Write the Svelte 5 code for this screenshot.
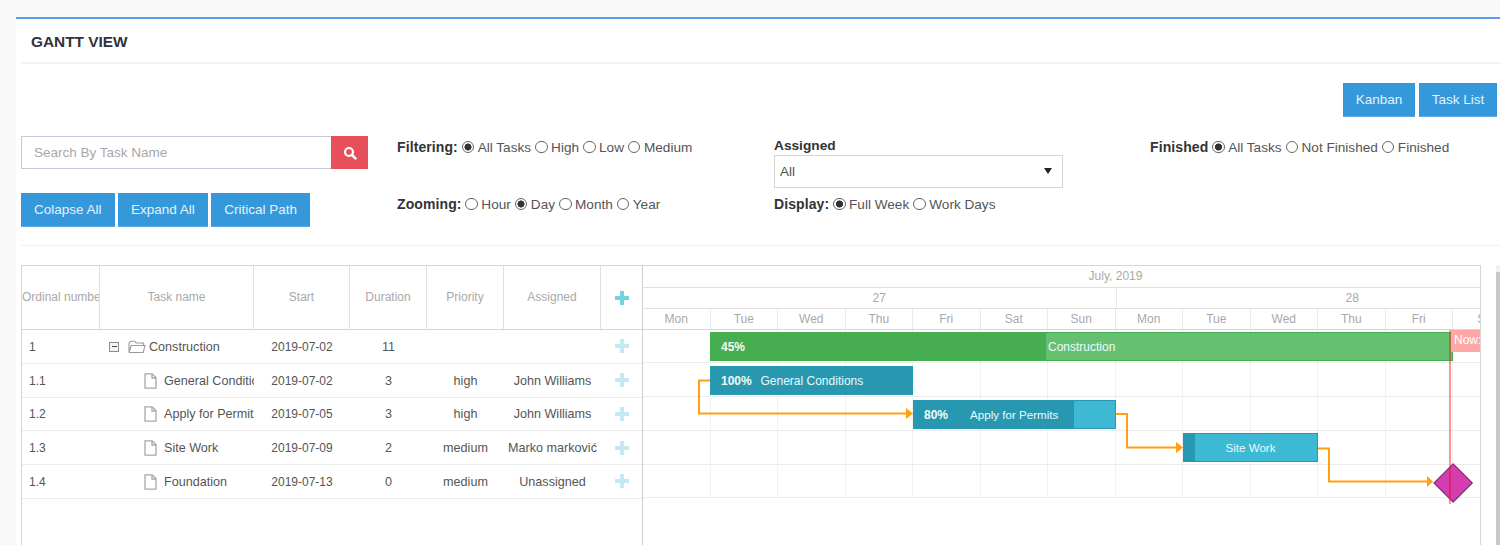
<script>
	const columns = [
		{ label: 'Ordinal number', width: 78, cls: 'ordinal' },
		{ label: 'Task name', width: 154 },
		{ label: 'Start', width: 96 },
		{ label: 'Duration', width: 77 },
		{ label: 'Priority', width: 77 },
		{ label: 'Assigned', width: 97 }
	];

	const rows = [
		{ no: '1', name: 'Construction', start: '2019-07-02', duration: '11', priority: '', assigned: '', project: true },
		{ no: '1.1', name: 'General Conditions', start: '2019-07-02', duration: '3', priority: 'high', assigned: 'John Williams' },
		{ no: '1.2', name: 'Apply for Permits', start: '2019-07-05', duration: '3', priority: 'high', assigned: 'John Williams' },
		{ no: '1.3', name: 'Site Work', start: '2019-07-09', duration: '2', priority: 'medium', assigned: 'Marko marković' },
		{ no: '1.4', name: 'Foundation', start: '2019-07-13', duration: '0', priority: 'medium', assigned: 'Unassigned' }
	];

	const days = ['Mon', 'Tue', 'Wed', 'Thu', 'Fri', 'Sat', 'Sun', 'Mon', 'Tue', 'Wed', 'Thu', 'Fri', 'Sat'];
	const dayWidth = 67.5;

	const filtering = [
		{ label: 'All Tasks', on: true },
		{ label: 'High' },
		{ label: 'Low' },
		{ label: 'Medium' }
	];
	const zooming = [{ label: 'Hour' }, { label: 'Day', on: true }, { label: 'Month' }, { label: 'Year' }];
	const display = [{ label: 'Full Week', on: true }, { label: 'Work Days' }];
	const finished = [{ label: 'All Tasks', on: true }, { label: 'Not Finished' }, { label: 'Finished' }];
</script>

{#snippet radios(name, items)}
	{#each items as item}
		<label class="radio"><input type="radio" {name} checked={item.on} />{item.label}</label>
	{/each}
{/snippet}

{#snippet plus()}
	<svg class="plus" viewBox="0 0 14 14" width="14" height="14"><path d="M5 0h4v5h5v4H9v5H5V9H0V5h5z" /></svg>
{/snippet}

<div class="card">
	<header class="title"><h1>GANTT VIEW</h1></header>

	<div class="views">
		<button class="btn kanban">Kanban</button>
		<button class="btn list">Task List</button>
	</div>

	<div class="filters">
		<div class="col">
			<div class="search">
				<input type="text" placeholder="Search By Task Name" />
				<button aria-label="Search">
					<svg viewBox="0 0 14 14" width="14" height="14">
						<circle cx="6" cy="6" r="4" fill="none" stroke="#fff" stroke-width="2.2" />
						<path d="M9 9l3.4 3.4" stroke="#fff" stroke-width="2.6" stroke-linecap="round" />
					</svg>
				</button>
			</div>
			<div class="actions">
				<button class="btn">Colapse All</button>
				<button class="btn">Expand All</button>
				<button class="btn">Critical Path</button>
			</div>
		</div>

		<div class="col options">
			<div class="line first"><b>Filtering:</b> {@render radios('filtering', filtering)}</div>
			<div class="line second"><b>Zooming:</b> {@render radios('zooming', zooming)}</div>
		</div>

		<div class="col options">
			<b class="assigned">Assigned</b>
			<div class="select">
				<select><option>All</option></select>
			</div>
			<div class="line display"><b>Display:</b> {@render radios('display', display)}</div>
		</div>

		<div class="col options">
			<div class="line first"><b>Finished</b> {@render radios('finished', finished)}</div>
		</div>
	</div>

	<div class="gantt">
		<div class="grid">
			<div class="grid-head">
				{#each columns as c}
					<div class="th {c.cls || ''}" style="width: {c.width}px"><span>{c.label}</span></div>
				{/each}
				<div class="th add">{@render plus()}</div>
			</div>
			{#each rows as r}
				<div class="tr">
					<div class="td no" style="width: 78px">{r.no}</div>
					<div class="td name" style="width: 154px">
						{#if r.project}
							<span class="toggle"></span>
							<svg class="folder" viewBox="0 0 18 14" width="18" height="14">
								<path d="M1 12.5V3.2L2.6 1.2h4.2L8.2 3H15.5V5.5M1 12.5H15.2L17 5.5H3.2L1.4 11.5" fill="none" stroke="#9a9a9a" stroke-width="1.1" />
							</svg>
						{:else}
							<svg class="file" viewBox="0 0 13 16" width="13" height="16">
								<path d="M1 .8h7.2L12 4.6v10.6H1zM8 1v4h4" fill="none" stroke="#a8a8a8" stroke-width="1.3" />
							</svg>
						{/if}
						<span class="label">{r.name}</span>
					</div>
					<div class="td date" style="width: 96px">{r.start}</div>
					<div class="td" style="width: 77px">{r.duration}</div>
					<div class="td" style="width: 77px">{r.priority}</div>
					<div class="td" style="width: 97px">{r.assigned}</div>
					<div class="td add faded">{@render plus()}</div>
				</div>
			{/each}
		</div>

		<div class="timeline">
			<div class="scale month"><div style="width: {dayWidth * 14}px">July, 2019</div></div>
			<div class="scale weeks">
				<div style="width: {dayWidth * 7}px">27</div>
				<div class="week" style="width: {dayWidth * 7}px">28</div>
			</div>
			<div class="scale days">
				{#each days as d}
					<div style="width: {dayWidth}px">{d}</div>
				{/each}
			</div>

			<div class="canvas">
				{#each rows as r}
					<div class="trow">
						{#each days as d}
							<div class="tcell" style="width: {dayWidth}px"></div>
						{/each}
					</div>
				{/each}

				<svg class="links" width="837" height="216">
					<g fill="none" stroke="#ffa011" stroke-width="2">
						<path d="M67 50.5H56V83.5H264" />
						<path d="M472 84H484V117.5H534" />
						<path d="M675 118.5H686V151.5H785" />
					</g>
					<g fill="#ffa011">
						<path d="M263 78l7 5.5-7 5.5z" />
						<path d="M533 112l7 5.5-7 5.5z" />
						<path d="M784 146l6 5.5-6 5.5z" />
					</g>
				</svg>

				<div class="bar project" style="left: 67px; width: 742.5px; top: 2.5px">
					<div class="progress" style="width: 45.2%"></div>
					<span class="pct">45%</span>
					<span class="text abs" style="left: 337px">Construction</span>
				</div>
				<div class="bar task" style="left: 67px; width: 203px; top: 36.5px">
					<div class="progress" style="width: 100%"></div>
					<span class="pct">100%</span>
					<span class="text abs" style="left: 49.5px">General Conditions</span>
				</div>
				<div class="bar task" style="left: 270px; width: 202.5px; top: 70.5px">
					<div class="progress" style="width: 80%"></div>
					<span class="pct">80%</span>
					<span class="text abs small" style="left: 56px">Apply for Permits</span>
				</div>
				<div class="bar task" style="left: 540px; width: 135px; top: 103.5px">
					<div class="progress" style="width: 8%"></div>
					<span class="text center small">Site Work</span>
				</div>
				<div class="milestone"></div>

				<div class="now-line"></div>
				<div class="now-label">Now:</div>
			</div>
		</div>
	</div>
	<div class="scrollbar"></div>
</div>

<style>
	:global(body) {
		margin: 0;
		background: #f9f9fa;
		font-family: 'Liberation Sans', Arial, sans-serif;
		overflow: hidden;
	}

	.card {
		position: relative;
		box-sizing: border-box;
		height: 528px;
		margin: 17px 0 0 16px;
		padding: 0 0 0 5px;
		background: #fff;
		border-top: 2px solid #5d9cec;
		color: #444;
		overflow: hidden;
	}

	.title {
		height: 43px;
		border-bottom: 2px solid #eef1f5;
		box-sizing: content-box;
	}

	h1 {
		margin: 0;
		padding: 15px 0 0 10px;
		font-size: 15.4px;
		line-height: 16px;
		font-weight: bold;
		color: #32323a;
	}

	.btn {
		height: 34px;
		padding: 0 13px;
		border: 0;
		border-bottom: 1px solid #5aa9e6;
		background: #3498db;
		color: #e4f2fb;
		font: 13.5px/33px 'Liberation Sans', Arial, sans-serif;
		white-space: nowrap;
	}

	.views {
		display: flex;
		justify-content: flex-end;
		gap: 4px;
		padding: 19px 3px 0 0;
	}

	.views .kanban {
		width: 72px;
		padding: 0;
	}

	.views .list {
		width: 78px;
		padding: 0;
	}

	.filters {
		display: grid;
		grid-template-columns: 376px 377px 376px 1fr;
		height: 109px;
		padding-top: 19px;
		box-sizing: content-box;
		border-bottom: 1px solid #eef1f5;
	}

	.search {
		display: flex;
		width: 347px;
		height: 33px;
	}

	.search input {
		box-sizing: border-box;
		flex: 1;
		min-width: 0;
		height: 33px;
		padding: 0 12px;
		border: 1px solid #c2cad8;
		border-right: 0;
		outline: none;
		font: 13.5px 'Liberation Sans', Arial, sans-serif;
	}

	.search input::placeholder {
		color: #a8a8a8;
		opacity: 1;
	}

	.search button {
		display: flex;
		align-items: center;
		justify-content: center;
		width: 37px;
		height: 33px;
		padding: 0;
		border: 0;
		background: #e7505a;
	}

	.actions {
		display: flex;
		gap: 3.5px;
		margin-top: 24px;
	}

	.options {
		font-size: 13.6px;
		color: #555;
	}

	.options b {
		color: #333;
		font-size: 14px;
		letter-spacing: 0.1px;
	}

	.line {
		line-height: 16px;
		white-space: nowrap;
	}

	.line.first {
		margin-top: 3px;
	}

	.line.second {
		margin-top: 40px;
	}

	.options b.assigned {
		display: block;
		margin-top: 1px;
		line-height: 18px;
		letter-spacing: 0;
		font-size: 13.7px;
	}

	.select {
		position: relative;
		width: 289px;
		height: 33px;
	}

	.select::after {
		content: '';
		position: absolute;
		right: 11px;
		top: 13px;
		border: 4px solid transparent;
		border-top: 6px solid #222;
		border-bottom: 0;
	}

	select {
		box-sizing: border-box;
		width: 100%;
		height: 33px;
		padding: 0 5px;
		border: 1px solid #d5d5d5;
		background: #fff;
		color: #555;
		font: 13.5px 'Liberation Sans', Arial, sans-serif;
		appearance: none;
		border-radius: 0;
	}

	.line.display {
		margin-top: 8px;
	}

	.radio {
		margin-right: 4px;
	}

	.radio input {
		appearance: none;
		box-sizing: border-box;
		width: 12.5px;
		height: 12.5px;
		margin: 0 3.5px 3px 0;
		vertical-align: middle;
		border: 1px solid #666;
		border-radius: 50%;
		background: #fff;
	}

	.radio input:checked {
		background: radial-gradient(circle, #333 0 3.3px, #fff 3.8px);
	}

	.gantt {
		display: flex;
		width: 1460px;
		height: 290px;
		margin-top: 19px;
		border: 1px solid #d6d6d6;
		border-bottom: 0;
		box-sizing: border-box;
		font-size: 12.6px;
	}

	.grid {
		flex: none;
		width: 620px;
		border-right: 1px solid #cfcfcf;
	}

	.grid-head {
		display: flex;
		height: 63px;
		border-bottom: 1px solid #d6d6d6;
		font-size: 12px;
	}

	.th {
		display: flex;
		align-items: center;
		justify-content: center;
		flex: none;
		box-sizing: border-box;
		border-right: 1px solid #e0e0e0;
		color: #a9a9a9;
		white-space: nowrap;
		overflow: hidden;
		padding-bottom: 2px;
	}

	.th.ordinal {
		justify-content: flex-start;
		padding-left: 0;
	}

	.th.add,
	.td.add {
		flex: 1;
		border: 0;
		padding: 0;
	}

	.plus {
		fill: #75d1e4;
	}

	.faded .plus {
		fill: #c5e9f2;
	}

	.tr {
		display: flex;
		box-sizing: border-box;
		height: 33.75px;
		border-bottom: 1px solid #ececec;
	}

	.td {
		display: flex;
		align-items: center;
		justify-content: center;
		flex: none;
		box-sizing: border-box;
		padding-top: 1px;
		color: #555;
		white-space: nowrap;
		overflow: hidden;
	}

	.td.date {
		font-size: 12px;
	}

	.td.no {
		justify-content: flex-start;
		padding-left: 7px;
		font-size: 12px;
	}

	.td.name {
		justify-content: flex-start;
		padding-left: 9px;
	}

	.toggle {
		position: relative;
		flex: none;
		box-sizing: border-box;
		width: 10px;
		height: 10px;
		margin-left: 0;
		border: 1px solid #8c8c8c;
		background: #f4f4f4;
	}

	.toggle::after {
		content: '';
		position: absolute;
		left: 1.5px;
		top: 3.5px;
		width: 5px;
		height: 1px;
		background: #444;
	}

	.folder {
		flex: none;
		margin: 0 3px 0 9px;
	}

	.file {
		flex: none;
		margin: 0 7px 0 35px;
	}

	.label {
		flex: none;
	}

	.timeline {
		flex: 1;
		min-width: 0;
		position: relative;
		overflow: hidden;
		font-size: 12px;
	}

	.scale {
		display: flex;
		box-sizing: border-box;
		border-bottom: 1px solid #e0e0e0;
		color: #a9a9a9;
		white-space: nowrap;
	}

	.scale > div {
		flex: none;
		box-sizing: border-box;
		text-align: center;
	}

	.month {
		height: 21.5px;
		line-height: 20px;
	}

	.weeks {
		height: 21px;
		line-height: 20px;
	}

	.weeks .week {
		border-left: 1px solid #ebebeb;
	}

	.days {
		height: 21px;
		line-height: 20px;
		border-bottom-color: #d6d6d6;
	}

	.days > div {
		border-right: 1px solid #ebebeb;
	}

	.canvas {
		position: relative;
		height: 226px;
	}

	.trow {
		display: flex;
		box-sizing: border-box;
		height: 33.75px;
		border-bottom: 1px solid #ececec;
	}

	.tcell {
		flex: none;
		box-sizing: border-box;
		border-right: 1px solid #f1f1f1;
	}

	.links {
		position: absolute;
		left: 0;
		top: 0;
	}

	.bar {
		position: absolute;
		box-sizing: border-box;
		height: 28.5px;
		line-height: 28px;
		color: #eafafd;
		white-space: nowrap;
	}

	.bar.project {
		background: #65c16f;
		border: 1px solid #46ad51;
	}

	.bar.task {
		background: #3db9d3;
		border: 1px solid #2898b0;
	}

	.progress {
		position: absolute;
		left: 0;
		top: 0;
		bottom: 0;
	}

	.project .progress {
		background: #46ad51;
	}

	.task .progress {
		background: #2898b0;
	}

	.pct {
		position: absolute;
		left: 10px;
		font-weight: bold;
		color: #f2fbf5;
	}

	.text.abs {
		position: absolute;
	}

	.text.center {
		position: absolute;
		left: 0;
		right: 0;
		text-align: center;
	}

	.text.small {
		font-size: 11.6px;
	}

	.milestone {
		position: absolute;
		left: 796px;
		top: 139px;
		box-sizing: border-box;
		width: 28.3px;
		height: 28.3px;
		background: #d33daf;
		border: 1px solid #70306a;
		transform: rotate(45deg);
	}

	.now-line {
		position: absolute;
		left: 806px;
		top: 0;
		width: 2px;
		height: 174px;
		background: rgba(255, 0, 0, 0.4);
	}

	.now-label {
		position: absolute;
		left: 808px;
		top: 0;
		width: 30px;
		height: 22px;
		padding-left: 3px;
		box-sizing: border-box;
		line-height: 21px;
		background: #ffa6a6;
		color: #fff;
		overflow: hidden;
		white-space: nowrap;
	}

	.scrollbar {
		position: absolute;
		right: 0;
		top: 246px;
		width: 4px;
		bottom: 0;
		background: linear-gradient(#f1f1f1 0 7px, #c8c8c8 7px);
	}
</style>
